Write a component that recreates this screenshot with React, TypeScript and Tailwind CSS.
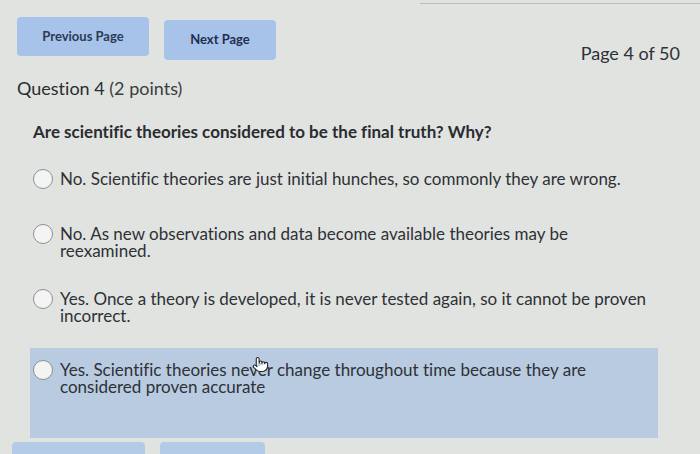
import { ReactNode } from "react";
import { Pointer } from "lucide-react";

const font = { fontFamily: "Lato, 'Noto Sans', sans-serif" };

function Radio() {
  return (
    <span className="h-[20px] w-[20px] shrink-0 rounded-full border-[1.5px] border-[#8a8f98] bg-[#f4f5f3]" />
  );
}

function Option({ children, className = "" }: { children: ReactNode; className?: string }) {
  return (
    <div className={`flex items-start gap-[7px] ${className}`}>
      <Radio />
      <p className="mt-[1px] w-[592px] text-[17px] leading-[17px] text-[#2e3136] [font-variant-ligatures:none]">
        {children}
      </p>
    </div>
  );
}

export default function App() {
  return (
    <div className="relative h-[454px] w-[700px] overflow-hidden bg-[#e1e3e0]" style={font}>
      <div className="absolute right-0 top-[3px] h-px w-[280px] bg-[#b9bcbf]" />

      {/* nav */}
      <div className="flex items-start justify-between pl-[17px] pr-[20px] pt-[17px]">
        <div className="flex gap-[15px]">
          <button className="h-[39px] w-[132px] rounded-[4px] bg-[#a8c3ea] text-[13px] font-bold text-[#2b3a55]">
            Previous Page
          </button>
          <button className="mt-[3px] h-[40px] w-[112px] rounded-[4px] bg-[#a8c3ea] text-[13px] font-bold text-[#1f2f4f]">
            Next Page
          </button>
        </div>
        <span className="mt-[23px] text-[18px] text-[#2e3136]">Page 4 of 50</span>
      </div>

      {/* question */}
      <div className="pl-[17px] pt-[11px] [font-variant-ligatures:none]">
        <h2 className="text-[18px] leading-[20px] text-[#2a2c30]">
          Question 4 <span className="text-[#3a3d42]">(2 points)</span>
        </h2>
        <p className="mt-[24px] pl-[16px] text-[17px] font-bold leading-[20px] text-[#2a2c30]">
          Are scientific theories considered to be the final truth? Why?
        </p>
      </div>

      <div className="mt-[27px] flex flex-col pl-[33px]">
        <Option>No. Scientific theories are just initial hunches, so commonly they are wrong.</Option>
        <Option className="mt-[35px]">
          No. As new observations and data become available theories may be reexamined.
        </Option>
        <Option className="mt-[30px]">
          Yes. Once a theory is developed, it is never tested again, so it cannot be proven incorrect.
        </Option>
      </div>

      <div className="relative ml-[30px] mt-[24px] h-[90px] w-[628px] bg-[#b9cbe1] pl-[3px] pt-[12px]">
        <Option>Yes. Scientific theories never change throughout time because they are considered proven accurate</Option>
        <Pointer
          size={17}
          strokeWidth={1.5}
          className="absolute left-[222px] top-[8px] fill-white text-[#222]"
        />
      </div>

      <div className="ml-[12px] mt-[4px] flex gap-[15px]">
        <div className="h-[20px] w-[133px] rounded-t-[4px] bg-[#b4cbe8]" />
        <div className="h-[20px] w-[105px] rounded-t-[4px] bg-[#b4cbe8]" />
      </div>
    </div>
  );
}
